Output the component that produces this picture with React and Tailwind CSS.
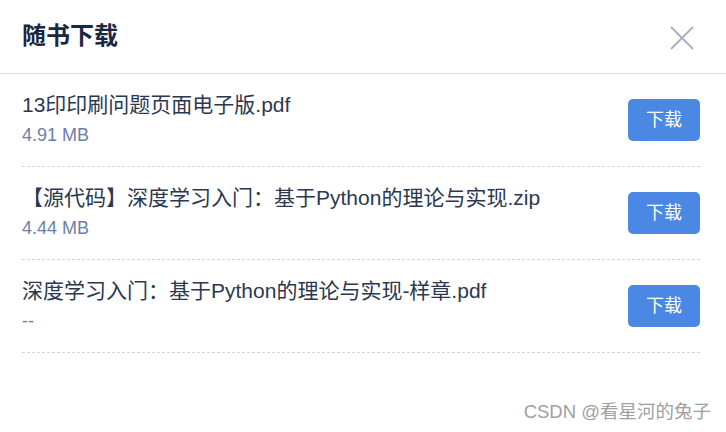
import React from "react";

const items = [
  { name: "13印印刷问题页面电子版.pdf", size: "4.91 MB" },
  { name: "【源代码】深度学习入门：基于Python的理论与实现.zip", size: "4.44 MB" },
  { name: "深度学习入门：基于Python的理论与实现-样章.pdf", size: "--" },
];

export default function App() {
  return (
    <div
      className="w-[726px] h-[432px] bg-white relative overflow-hidden"
      style={{ fontFamily: '"Liberation Sans", Arial, "Noto Sans CJK SC", sans-serif' }}
    >
      <div className="h-[74px] border-b border-[#dadfe6] flex items-center justify-between pl-[22px] pr-[31px]">
        <div className="text-[24px] font-bold text-[#1b2740] leading-none -mt-[2px]">随书下载</div>
        <svg width="26" height="26" viewBox="0 0 26 26" className="mt-[2px]">
          <path d="M2 2 L24 24 M24 2 L2 24" stroke="#a5b0c6" strokeWidth="1.8" fill="none" />
        </svg>
      </div>
      <div className="mx-[22px] w-[678px]">
        {items.map((it, i) => (
          <div
            key={i}
            className="flex items-center justify-between pt-[16px] pb-[16px] border-b border-dashed border-[#c8dbe2]"
          >
            <div className="flex flex-col">
              <div className="text-[21px] leading-[30px] text-[#2b3850]">{it.name}</div>
              <div className="text-[18px] leading-[30px] text-[#6b7fa9]">{it.size}</div>
            </div>
            <button className="w-[72px] h-[42px] rounded-[5px] bg-[#4a88e3] text-white text-[18px] leading-none">
              下载
            </button>
          </div>
        ))}
      </div>
      <div className="absolute right-[15px] top-[400px] text-[18.5px] leading-[24px] text-[#a0a0a0]">
        CSDN @看星河的兔子
      </div>
    </div>
  );
}
